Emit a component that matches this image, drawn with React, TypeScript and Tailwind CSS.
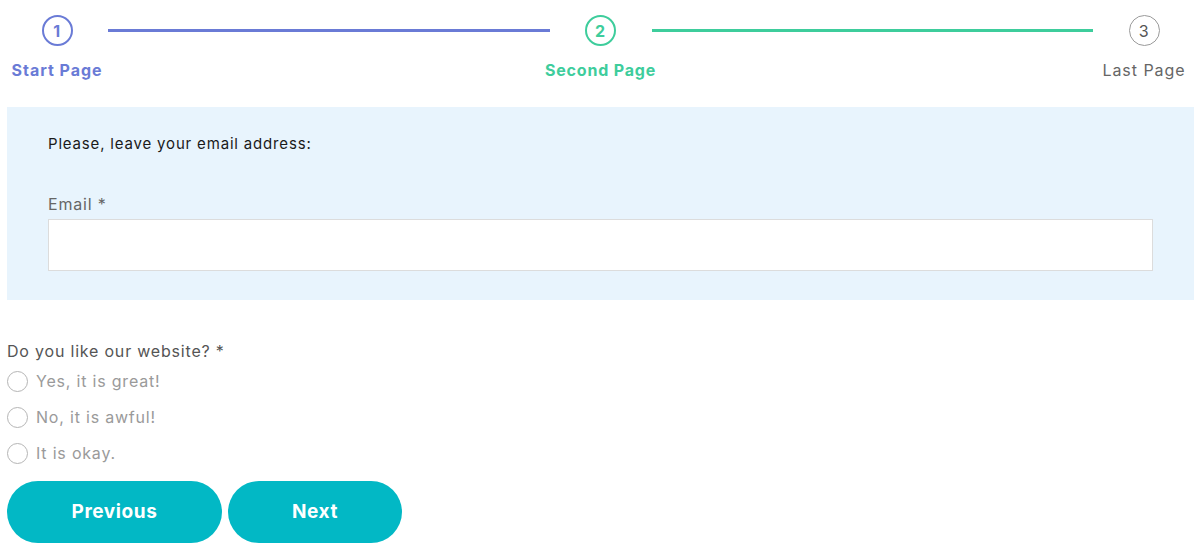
import { useState } from "react";

type Step = { n: number; label: string; state: "done" | "active" | "todo" };

const steps: Step[] = [
  { n: 1, label: "Start Page", state: "done" },
  { n: 2, label: "Second Page", state: "active" },
  { n: 3, label: "Last Page", state: "todo" },
];

function StepItem({ step }: { step: Step }) {
  const circle =
    step.state === "done"
      ? "border-2 border-[#6a7bd6] text-[#6a7bd6] font-bold"
      : step.state === "active"
        ? "border-2 border-[#3ecd9c] text-[#3ecd9c] font-bold"
        : "border border-[#9a9a9a] text-[#555] font-normal";
  const label =
    step.state === "done"
      ? "text-[#6a7bd6] font-bold tracking-[0.06em]"
      : step.state === "active"
        ? "text-[#3ecd9c] font-bold tracking-[0.05em]"
        : "text-[#666] font-normal tracking-[0.06em]";
  return (
    <div className="flex w-[102px] shrink-0 flex-col items-center">
      <div
        className={`flex h-[31px] w-[31px] items-center justify-center rounded-full text-[16px] ${circle}`}
      >
        {step.n}
      </div>
      <div className={`mt-[13px] whitespace-nowrap text-[16px] leading-[22px] ${label}`}>
        {step.label}
      </div>
    </div>
  );
}

const options = ["Yes, it is great!", "No, it is awful!", "It is okay."];

export default function App() {
  const [choice, setChoice] = useState<number | null>(null);

  return (
    <div
      className="min-h-[554px] bg-white tracking-[0.05em]"
      style={{ fontFamily: "Inter, 'Noto Sans', sans-serif" }}
    >
      {/* progress */}
      <div className="flex items-start pl-[6px] pr-[5px] pt-[15px]">
        <StepItem step={steps[0]} />
        <div className="mt-[14px] h-[3px] flex-1 bg-[#6a7bd6]" />
        <StepItem step={steps[1]} />
        <div className="mt-[14px] h-[3px] flex-1 bg-[#3ecd9c]" />
        <StepItem step={steps[2]} />
      </div>

      {/* email panel */}
      <div className="ml-[7px] mr-[6px] mt-[26px] bg-[#e8f4fd] px-[41px] pb-[29px] pt-[26px]">
        <p className="text-[15px] leading-[22px] tracking-[0.055em] text-[#1a1a1a]">
          Please, leave your email address:
        </p>
        <label className="mt-[38px] block text-[16px] leading-[22px] text-[#666]">
          Email *
        </label>
        <input
          type="email"
          className="mt-[4px] block h-[52px] w-full border border-[#dcdcdc] bg-white px-3 outline-none"
        />
      </div>

      {/* question */}
      <div className="px-[7px] pt-[40px]">
        <div className="text-[16px] leading-[22px] text-[#555]">
          Do you like our website? *
        </div>
        <div className="mt-[8px] flex flex-col gap-[14px]">
          {options.map((o, i) => (
            <label
              key={o}
              className="flex h-[22px] cursor-pointer items-center gap-[8px]"
              onClick={() => setChoice(i)}
            >
              <span className="flex h-[21px] w-[21px] items-center justify-center rounded-full border border-[#b5b5b5] bg-white">
                {choice === i && <span className="h-[9px] w-[9px] rounded-full bg-[#02b8c5]" />}
              </span>
              <span className="text-[16px] text-[#9a9a9a]">{o}</span>
            </label>
          ))}
        </div>

        <div className="mt-[17px] flex gap-[6px]">
          <button className="h-[62px] w-[215px] rounded-full bg-[#02b8c5] text-[19px] font-bold tracking-[0.03em] text-white">
            Previous
          </button>
          <button className="h-[62px] w-[174px] rounded-full bg-[#02b8c5] text-[19px] font-bold tracking-[0.03em] text-white">
            Next
          </button>
        </div>
      </div>
    </div>
  );
}
